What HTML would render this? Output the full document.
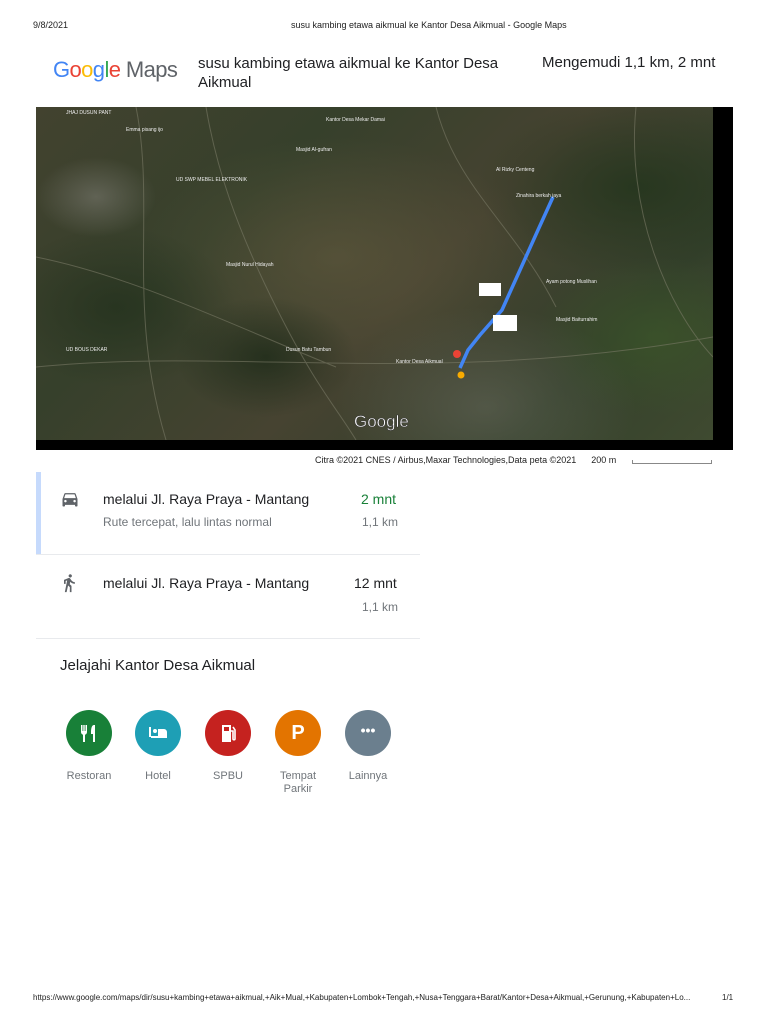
<!DOCTYPE html>
<html><head><meta charset="utf-8"><style>
body{margin:0;width:768px;height:1024px;background:#fff;position:relative;font-family:"Liberation Sans",sans-serif;overflow:hidden}
.a{position:absolute;white-space:nowrap}
.hdr{font-size:9px;color:#222;top:20px}
.map{position:absolute;left:36px;top:107px;width:677px;height:333px;overflow:hidden;
background:
radial-gradient(ellipse 60px 40px at 60px 90px,rgba(120,120,110,.6),transparent),
radial-gradient(ellipse 120px 80px at 80px 200px,rgba(30,45,25,.6),transparent),
radial-gradient(ellipse 160px 90px at 600px 80px,rgba(30,50,25,.7),transparent),
radial-gradient(ellipse 90px 60px at 230px 250px,rgba(25,40,22,.7),transparent),
radial-gradient(ellipse 200px 120px at 300px 150px,rgba(105,95,65,.5),transparent),
radial-gradient(ellipse 150px 100px at 450px 300px,rgba(120,120,110,.4),transparent),
radial-gradient(ellipse 120px 80px at 620px 230px,rgba(60,90,40,.6),transparent),
linear-gradient(135deg,#42422f 0%,#36402b 30%,#464331 55%,#34402b 80%,#3f4a30 100%)}
.lbl{position:absolute;color:#eee;font-size:5px}
.t{font-size:14px;color:#202124}
.s{font-size:12px;color:#70757a}
.c{position:absolute;width:46px;height:46px;border-radius:50%;top:710px}
.cl{position:absolute;top:770px;width:70px;text-align:center;font-size:11px;color:#70757a;line-height:13px}
</style></head><body>
<div class="a hdr" style="left:33px">9/8/2021</div>
<div class="a hdr" style="left:291px">susu kambing etawa aikmual ke Kantor Desa Aikmual - Google Maps</div>
<div class="a" style="left:53px;top:57px;font-size:22px;letter-spacing:-0.6px"><span style="color:#4285f4">G</span><span style="color:#ea4335">o</span><span style="color:#fbbc05">o</span><span style="color:#4285f4">g</span><span style="color:#34a853">l</span><span style="color:#ea4335">e</span><span style="color:#5f6368"> Maps</span></div>
<div class="a" style="left:198px;top:54px;font-size:15px;color:#202124;line-height:19px">susu kambing etawa aikmual ke Kantor Desa<br>Aikmual</div>
<div class="a" style="left:542px;top:54px;font-size:15px;color:#202124">Mengemudi 1,1 km, 2 mnt</div>
<div style="position:absolute;left:36px;top:440px;width:697px;height:10px;background:#000"></div>
<div style="position:absolute;left:713px;top:107px;width:20px;height:343px;background:#000"></div>
<div class="map">
<svg width="677" height="333" style="position:absolute;left:0;top:0">
<g stroke="#7a7a66" stroke-width="1" fill="none" opacity=".6">
<path d="M170 0 C180 60 200 120 240 200 S300 300 320 333"/><path d="M0 150 C100 170 200 220 300 260"/><path d="M400 0 C420 80 480 120 520 200"/><path d="M600 0 C590 100 630 200 677 250"/><path d="M100 0 C120 100 90 200 130 333"/><path d="M0 260 C200 240 400 280 677 230"/></g>
<polyline points="517,90 502,123 484,163 466,203 444,228 432,243 424,261" fill="none" stroke="#4285f4" stroke-width="3.5"/>
<circle cx="421" cy="247" r="4" fill="#ea4335"/><circle cx="425" cy="268" r="3.5" fill="#f9ab00"/>
<rect x="443" y="176" width="22" height="13" fill="#fff"/><rect x="457" y="208" width="24" height="16" fill="#fff"/>
<text x="318" y="320" font-family="Liberation Sans" font-size="17" fill="#fff" stroke="#333" stroke-width=".5">Google</text>
</svg>
<div class="lbl" style="left:30px;top:3px">JHAJ DUSUN PANT</div>
<div class="lbl" style="left:90px;top:20px">Emma pisang ijo</div>
<div class="lbl" style="left:290px;top:10px">Kantor Desa Mekar Damai</div>
<div class="lbl" style="left:260px;top:40px">Masjid Al-gufran</div>
<div class="lbl" style="left:140px;top:70px">UD SWP MEBEL ELEKTRONIK</div>
<div class="lbl" style="left:460px;top:60px">Al Rizky Centeng</div>
<div class="lbl" style="left:480px;top:86px">Zinahira berkah jaya</div>
<div class="lbl" style="left:190px;top:155px">Masjid Nurul Hidayah</div>
<div class="lbl" style="left:510px;top:172px">Ayam potong Muslihan</div>
<div class="lbl" style="left:30px;top:240px">UD BOUS DEKAR</div>
<div class="lbl" style="left:250px;top:240px">Dusun Batu Tambun</div>
<div class="lbl" style="left:360px;top:252px">Kantor Desa Aikmual</div>
<div class="lbl" style="left:520px;top:210px">Masjid Baiturrahim</div>
</div>
<div class="a" style="left:315px;top:455px;font-size:9px;color:#222">Citra ©2021 CNES / Airbus,Maxar Technologies,Data peta ©2021 &nbsp;&nbsp;&nbsp;&nbsp; 200 m</div>
<div style="position:absolute;left:632px;top:460px;width:78px;height:3px;border:1px solid #888;border-top:none"></div>
<div style="position:absolute;left:36px;top:472px;width:5px;height:82px;background:#c6dafc"></div>
<div style="position:absolute;left:36px;top:554px;width:384px;height:1px;background:#e8eaed"></div>
<div style="position:absolute;left:36px;top:638px;width:384px;height:1px;background:#e8eaed"></div>
<svg style="position:absolute;left:60px;top:489px" width="20" height="20" viewBox="0 0 24 24"><path fill="#5f6368" d="M18.9 6c-.2-.6-.8-1-1.4-1h-11c-.7 0-1.2.4-1.4 1L3 12v8c0 .6.4 1 1 1h1c.6 0 1-.4 1-1v-1h12v1c0 .6.4 1 1 1h1c.6 0 1-.4 1-1v-8l-2.1-6zM6.5 16C5.7 16 5 15.3 5 14.5S5.7 13 6.5 13 8 13.7 8 14.5 7.3 16 6.5 16zm11 0c-.8 0-1.5-.7-1.5-1.5s.7-1.5 1.5-1.5 1.5.7 1.5 1.5-.7 1.5-1.5 1.5zM5 11l1.5-4.5h11L19 11H5z"/></svg>
<svg style="position:absolute;left:59px;top:572px" width="20" height="22" viewBox="0 0 24 24"><path fill="#5f6368" d="M13.5 5.5c1.1 0 2-.9 2-2s-.9-2-2-2-2 .9-2 2 .9 2 2 2zM9.8 8.9L7 23h2.1l1.8-8 2.1 2v6h2v-7.5l-2.1-2 .6-3C14.8 12 16.8 13 19 13v-2c-1.9 0-3.5-1-4.3-2.4l-1-1.6c-.4-.6-1-1-1.700-1-.3 0-.5.1-.8.1L6 8.300V13h2V9.6l1.8-.7"/></svg>
<div class="a t" style="left:103px;top:491px">melalui Jl. Raya Praya - Mantang</div>
<div class="a s" style="left:103px;top:515px">Rute tercepat, lalu lintas normal</div>
<div class="a t" style="left:361px;top:491px;color:#188038">2 mnt</div>
<div class="a s" style="left:362px;top:515px">1,1 km</div>
<div class="a t" style="left:103px;top:575px">melalui Jl. Raya Praya - Mantang</div>
<div class="a t" style="left:354px;top:575px">12 mnt</div>
<div class="a s" style="left:362px;top:600px">1,1 km</div>
<div class="a" style="left:60px;top:657px;font-size:15px;color:#202124">Jelajahi Kantor Desa Aikmual</div>
<div class="c" style="left:66px;background:#188038"><svg width="46" height="46" viewBox="0 0 46 46"><path fill="#fff" d="M15 15v7c0 1.5 1 2.5 2 2.7V32h2v-7.3c1-.2 2-1.2 2-2.7v-7h-1.5v6h-.8v-6h-1.4v6h-.8v-6zM28 15c-2 0-3 3-3 7v2h2v8h2V15z"/></svg></div>
<div class="c" style="left:135px;background:#1e9fb5"><svg width="46" height="46" viewBox="0 0 46 46"><path fill="#fff" d="M14 17h2v10h-2zM16 26h16v2h-16zM18 21a2 2 0 104 0 2 2 0 10-4 0zM23 19h6c1.5 0 3 1.5 3 3v4h-9z"/></svg></div>
<div class="c" style="left:205px;background:#c5221f"><svg width="46" height="46" viewBox="0 0 46 46"><path fill="#fff" d="M17 15h9v17h-9zM19 17v4h5v-4z"/><path stroke="#fff" stroke-width="1.6" fill="none" d="M26 21h2v8c0 1 2 1 2 0v-9l-2-3"/></svg></div>
<div class="c" style="left:275px;background:#e37400"><div style="color:#fff;font-weight:bold;font-size:20px;text-align:center;line-height:46px">P</div></div>
<div class="c" style="left:345px;background:#6b7f8e"><div style="color:#fff;font-weight:bold;font-size:14px;text-align:center;line-height:40px">•••</div></div>
<div class="cl" style="left:54px">Restoran</div>
<div class="cl" style="left:123px">Hotel</div>
<div class="cl" style="left:193px">SPBU</div>
<div class="cl" style="left:263px">Tempat<br>Parkir</div>
<div class="cl" style="left:333px">Lainnya</div>
<div class="a" style="left:33px;top:993px;font-size:8px;color:#222">https://www.google.com/maps/dir/susu+kambing+etawa+aikmual,+Aik+Mual,+Kabupaten+Lombok+Tengah,+Nusa+Tenggara+Barat/Kantor+Desa+Aikmual,+Gerunung,+Kabupaten+Lo...</div>
<div class="a" style="left:722px;top:993px;font-size:8px;color:#222">1/1</div>
</body></html>
